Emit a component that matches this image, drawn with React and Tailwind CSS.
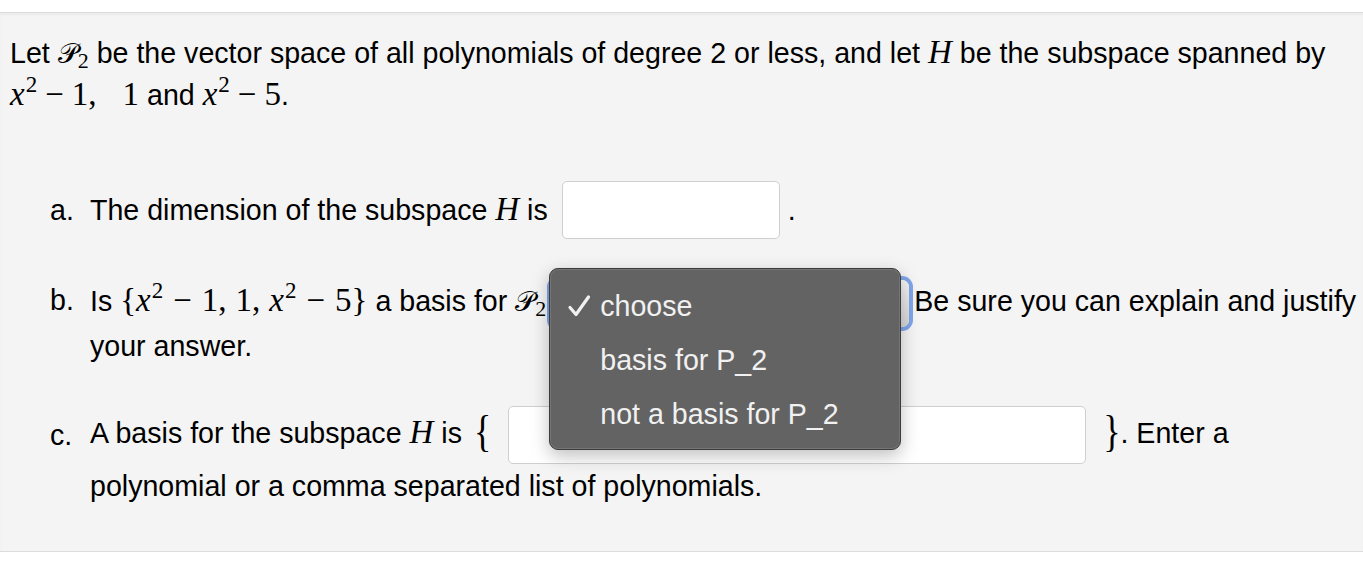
import React from "react"

const M = ({ children, className = "" }) => (
  <span className={`font-['Liberation_Serif','DejaVu_Serif',serif] text-[33px] ${className}`}>{children}</span>
)
const V = ({ children }) => <M className="italic">{children}</M>
const P2 = () => (
  <M>
    <span className="font-['DejaVu_Sans','Liberation_Serif',serif] text-[28px]">𝒫</span>
    <span className="relative top-[5px] text-[22px]">2</span>
  </M>
)
const Sq = () => <span className="relative top-[-13px] ml-[1px] text-[23px]">2</span>
const Minus = ({ w = "mx-[7px]" }) => <span className={w}>−</span>
const Comma = ({ w = "mr-[6px]" }) => <span className={w}>,</span>

function Check() {
  return (
    <svg width="24" height="24" viewBox="0 0 24 24" className="ml-[17px]">
      <path d="M3 13.5 L9 20.5 L21.5 3" fill="none" stroke="#f1f1f1" strokeWidth="3.2" strokeLinecap="round" strokeLinejoin="round" />
    </svg>
  )
}

function Dropdown() {
  const items = ["choose", "basis for P_2", "not a basis for P_2"]
  return (
    <div className="absolute left-[-2px] top-[-12px] z-10 w-[352px] rounded-[9px] border border-[#3b3b3b] bg-[#636363] pt-[10px] pb-[8px] shadow-[0_6px_18px_rgba(0,0,0,0.25),inset_0_0_0_1px_rgba(255,255,255,0.12)]">
      {items.map((t, i) => (
        <div key={t} className="flex h-[54px] items-center text-[28.6px] leading-none text-[#f1f1f1]">
          <span className="flex w-[50px] items-center">{i === 0 ? <Check /> : null}</span>
          <span>{t}</span>
        </div>
      ))}
    </div>
  )
}

export default function App() {
  return (
    <div className="min-h-screen bg-white font-['Liberation_Sans',Arial,sans-serif] text-[28.6px] text-black">
      <div className="mt-[12px] h-[540px] border-y border-[#dcdcdc] bg-[#f4f4f4] pl-[10px] pr-0 pt-[20px] shadow-[inset_0_2px_2px_rgba(0,0,0,0.04)]">
        <p className="pr-[10px] leading-[38px]">
          Let <P2 /> be the vector space of all polynomials of degree 2 or less, and let <V>H</V> be the subspace spanned by
          <br />
          <M><V>x</V><Sq /><Minus w="mx-[8px]" />1<Comma /></M><M className="ml-[20px]">1</M> and <M><V>x</V><Sq /><Minus w="mx-[8px]" />5</M>.
        </p>

        <div className="mt-[64px] flex items-center pl-[40px]">
          <span className="w-[40px] shrink-0">a.</span>
          <span>
            The dimension of the subspace <V>H</V> is
          </span>
          <input className="ml-[14px] h-[58px] w-[218px] rounded-[5px] border border-[#cfcfcf] bg-white" />
          <span className="ml-[8px]">.</span>
        </div>

        <div className="mt-[40px] flex pl-[40px]">
          <span className="w-[40px] shrink-0 leading-[43px]">b.</span>
          <div className="leading-[43px]">
            Is <M>{"{"}<V>x</V><Sq /><Minus w="mx-[10px]" />1<Comma w="mr-[9px]" />1<Comma w="mr-[9px]" /><V>x</V><Sq /><Minus w="mx-[10px]" />5{"}"}</M> a basis for <P2 />
            <span className="relative mx-[5px] -my-[4px] inline-block h-[47px] w-[358px] align-middle">
              <span className="absolute inset-0 rounded-[7px] bg-gradient-to-b from-[#f6f6f6] to-[#d6d6d6] ring-4 ring-[#7fa6ea]" />
              <Dropdown />
            </span>
            Be sure you can explain and justify your answer.
          </div>
        </div>

        <div className="mt-[38px] flex pl-[40px]">
          <span className="w-[40px] shrink-0 leading-[58px]">c.</span>
          <div className="leading-[53px]">
            A basis for the subspace <V>H</V> is <M className="ml-[4px] inline-block scale-y-125 text-[36px] leading-none">{"{"}</M>
            <input className="mx-[17px] -my-[4px] h-[58px] w-[578px] rounded-[5px] border border-[#cfcfcf] bg-white align-middle" />
            <M className="inline-block scale-y-125 text-[36px] leading-none">{"}"}</M>. Enter a polynomial or a comma separated list of polynomials.
          </div>
        </div>
      </div>
    </div>
  )
}
